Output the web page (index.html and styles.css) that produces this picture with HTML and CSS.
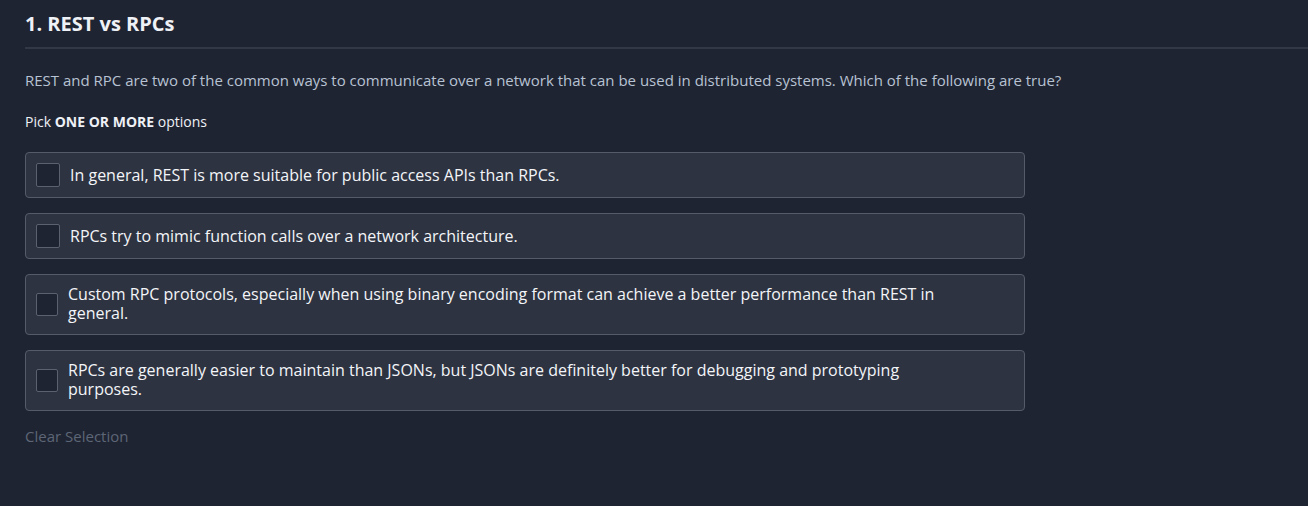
FILE: index.html
```html
<!DOCTYPE html>
<html lang="en">
<head>
<meta charset="utf-8">
<title>REST vs RPCs</title>
<link rel="stylesheet" href="styles.css">
</head>
<body>
<main class="question">
  <h1 class="q-title">1. REST vs RPCs</h1>
  <p class="q-text">REST and RPC are two of the common ways to communicate over a network that can be used in distributed systems. Which of the following are true?</p>
  <p class="q-hint">Pick <strong>ONE OR MORE</strong> options</p>
  <ul class="options">
    <li class="option"><span class="box"></span><span class="label">In general, REST is more suitable for public access APIs than RPCs.</span></li>
    <li class="option"><span class="box"></span><span class="label">RPCs try to mimic function calls over a network architecture.</span></li>
    <li class="option option-wide"><span class="box"></span><span class="label">Custom RPC protocols, especially when using binary encoding format can achieve a better performance than REST in general.</span></li>
    <li class="option option-wide"><span class="box"></span><span class="label">RPCs are generally easier to maintain than JSONs, but JSONs are definitely better for debugging and prototyping purposes.</span></li>
  </ul>
  <div class="clear">Clear Selection</div>
</main>
</body>
</html>
```
FILE: styles.css
```css
html, body {
  margin: 0;
  padding: 0;
  background: #1f2432;
  font-family: "Open Sans", "Noto Sans", sans-serif;
}
.question {
  padding: 9px 0 0 25px;
}
.q-title {
  margin: 0;
  font-size: 20px;
  line-height: 30px;
  font-weight: 700;
  color: #eef1f6;
  padding-bottom: 8px;
  border-bottom: 2px solid #323846;
}
.q-text {
  margin: 20px 0 0;
  font-size: 15px;
  line-height: 22px;
  color: #b7c2d3;
}
.q-hint {
  margin: 21px 0 0;
  font-size: 14px;
  line-height: 20px;
  color: #eef1f6;
}
.q-hint strong { font-weight: 700; }
.options {
  list-style: none;
  margin: 20px 0 0;
  padding: 0;
  width: 1000px;
  display: flex;
  flex-direction: column;
  gap: 15px;
}
.option {
  box-sizing: border-box;
  display: flex;
  align-items: center;
  gap: 10px;
  padding: 10px;
  border: 1px solid #555b69;
  border-radius: 4px;
  background: #2e3341;
}
.option-wide {
  padding-bottom: 11px;
}
.option-wide .box {
  width: 22px;
  height: 23px;
}
.box {
  flex: none;
  box-sizing: border-box;
  width: 24px;
  height: 24px;
  border: 1px solid #5b6170;
  border-radius: 2px;
  background: #1f2432;
}
.label {
  max-width: 880px;
  font-size: 16px;
  line-height: 19px;
  color: #f3f5f8;
}
.clear {
  margin-top: 15px;
  font-size: 15px;
  line-height: 20px;
  color: #5d6676;
}
```
